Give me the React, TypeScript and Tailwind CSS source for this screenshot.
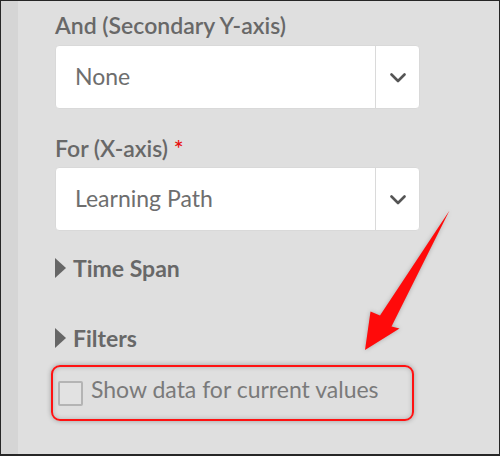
import React from "react";

type SelectBoxProps = {
  value: string;
};

function Chevron() {
  return (
    <svg width="16" height="10" viewBox="0 0 16 10" fill="none">
      <path d="M1.5 1.5 L8 8 L14.5 1.5" stroke="#555" strokeWidth="2.6" strokeLinecap="round" strokeLinejoin="round" />
    </svg>
  );
}

function SelectBox({ value }: SelectBoxProps) {
  return (
    <div className="flex h-[64px] w-[365px] rounded-[4px] border border-[#d9d9d9] bg-white">
      <div className="flex flex-1 items-center pb-[3px] pl-[19px] text-[23px] leading-[28px] text-[#6e6e6e]">
        {value}
      </div>
      <div className="flex w-[44px] items-center justify-center border-l border-[#dadada] pt-[2px]">
        <Chevron />
      </div>
    </div>
  );
}

function Section({ title, className }: { title: string; className: string }) {
  return (
    <div className={`flex items-center ${className}`}>
      <svg width="11" height="20" viewBox="0 0 11 20">
        <path d="M0 0 L11 10 L0 20 Z" fill="#666" />
      </svg>
      <span className="ml-[7px] text-[23px] font-bold leading-[28px] text-[#686868]">{title}</span>
    </div>
  );
}

export default function App() {
  return (
    <div
      className="relative flex h-[456px] w-[500px] overflow-hidden border border-b-2 border-[#262626] bg-[#dfdfdf]"
      style={{ fontFamily: "Lato, 'Open Sans', sans-serif" }}
    >
      <div className="w-[17px] shrink-0 bg-[#d5d5d5]" />

      <div className="flex-1 pl-[37px] pt-[10px]">
        <label className="block text-[23px] font-semibold leading-[28px] text-[#686868]">
          And (Secondary Y-axis)
        </label>
        <div className="mt-[6px]">
          <SelectBox value="None" />
        </div>

        <label className="mt-[25px] block text-[23px] font-semibold leading-[28px] text-[#686868]">
          For (X-axis) <span className="text-[#e81010]">*</span>
        </label>
        <div className="mt-[5px]">
          <SelectBox value="Learning Path" />
        </div>

        <Section title="Time Span" className="mt-[23px]" />
        <Section title="Filters" className="mt-[42px]" />

        <div className="ml-[-4px] mt-[13px] flex h-[56px] w-[363px] items-center rounded-[9px] border-2 border-[#ff1212] pl-[5px] shadow-[0_0_5px_rgba(0,0,0,0.3),inset_0_0_5px_rgba(0,0,0,0.2)]">
          <div className="h-[25px] w-[25px] rounded-[2px] border-2 border-[#b4b4b4] bg-[#e2e2e2]" />
          <span className="ml-[8px] pb-[9px] text-[23px] leading-[28px] text-[#7a7a7a]">
            Show data for current values
          </span>
        </div>
      </div>

      <svg
        className="pointer-events-none absolute left-[-1px] top-[-1px]"
        width="500"
        height="456"
        viewBox="0 0 500 456"
        style={{ filter: "drop-shadow(0 0 2px rgba(0,0,0,0.25))" }}
      >
        <polygon
          points="365,350 370.5,311.5 380,315.5 449.5,210.5 391.5,326.5 399.5,328.5"
          fill="#ff0a0a"
        />
      </svg>
    </div>
  );
}
